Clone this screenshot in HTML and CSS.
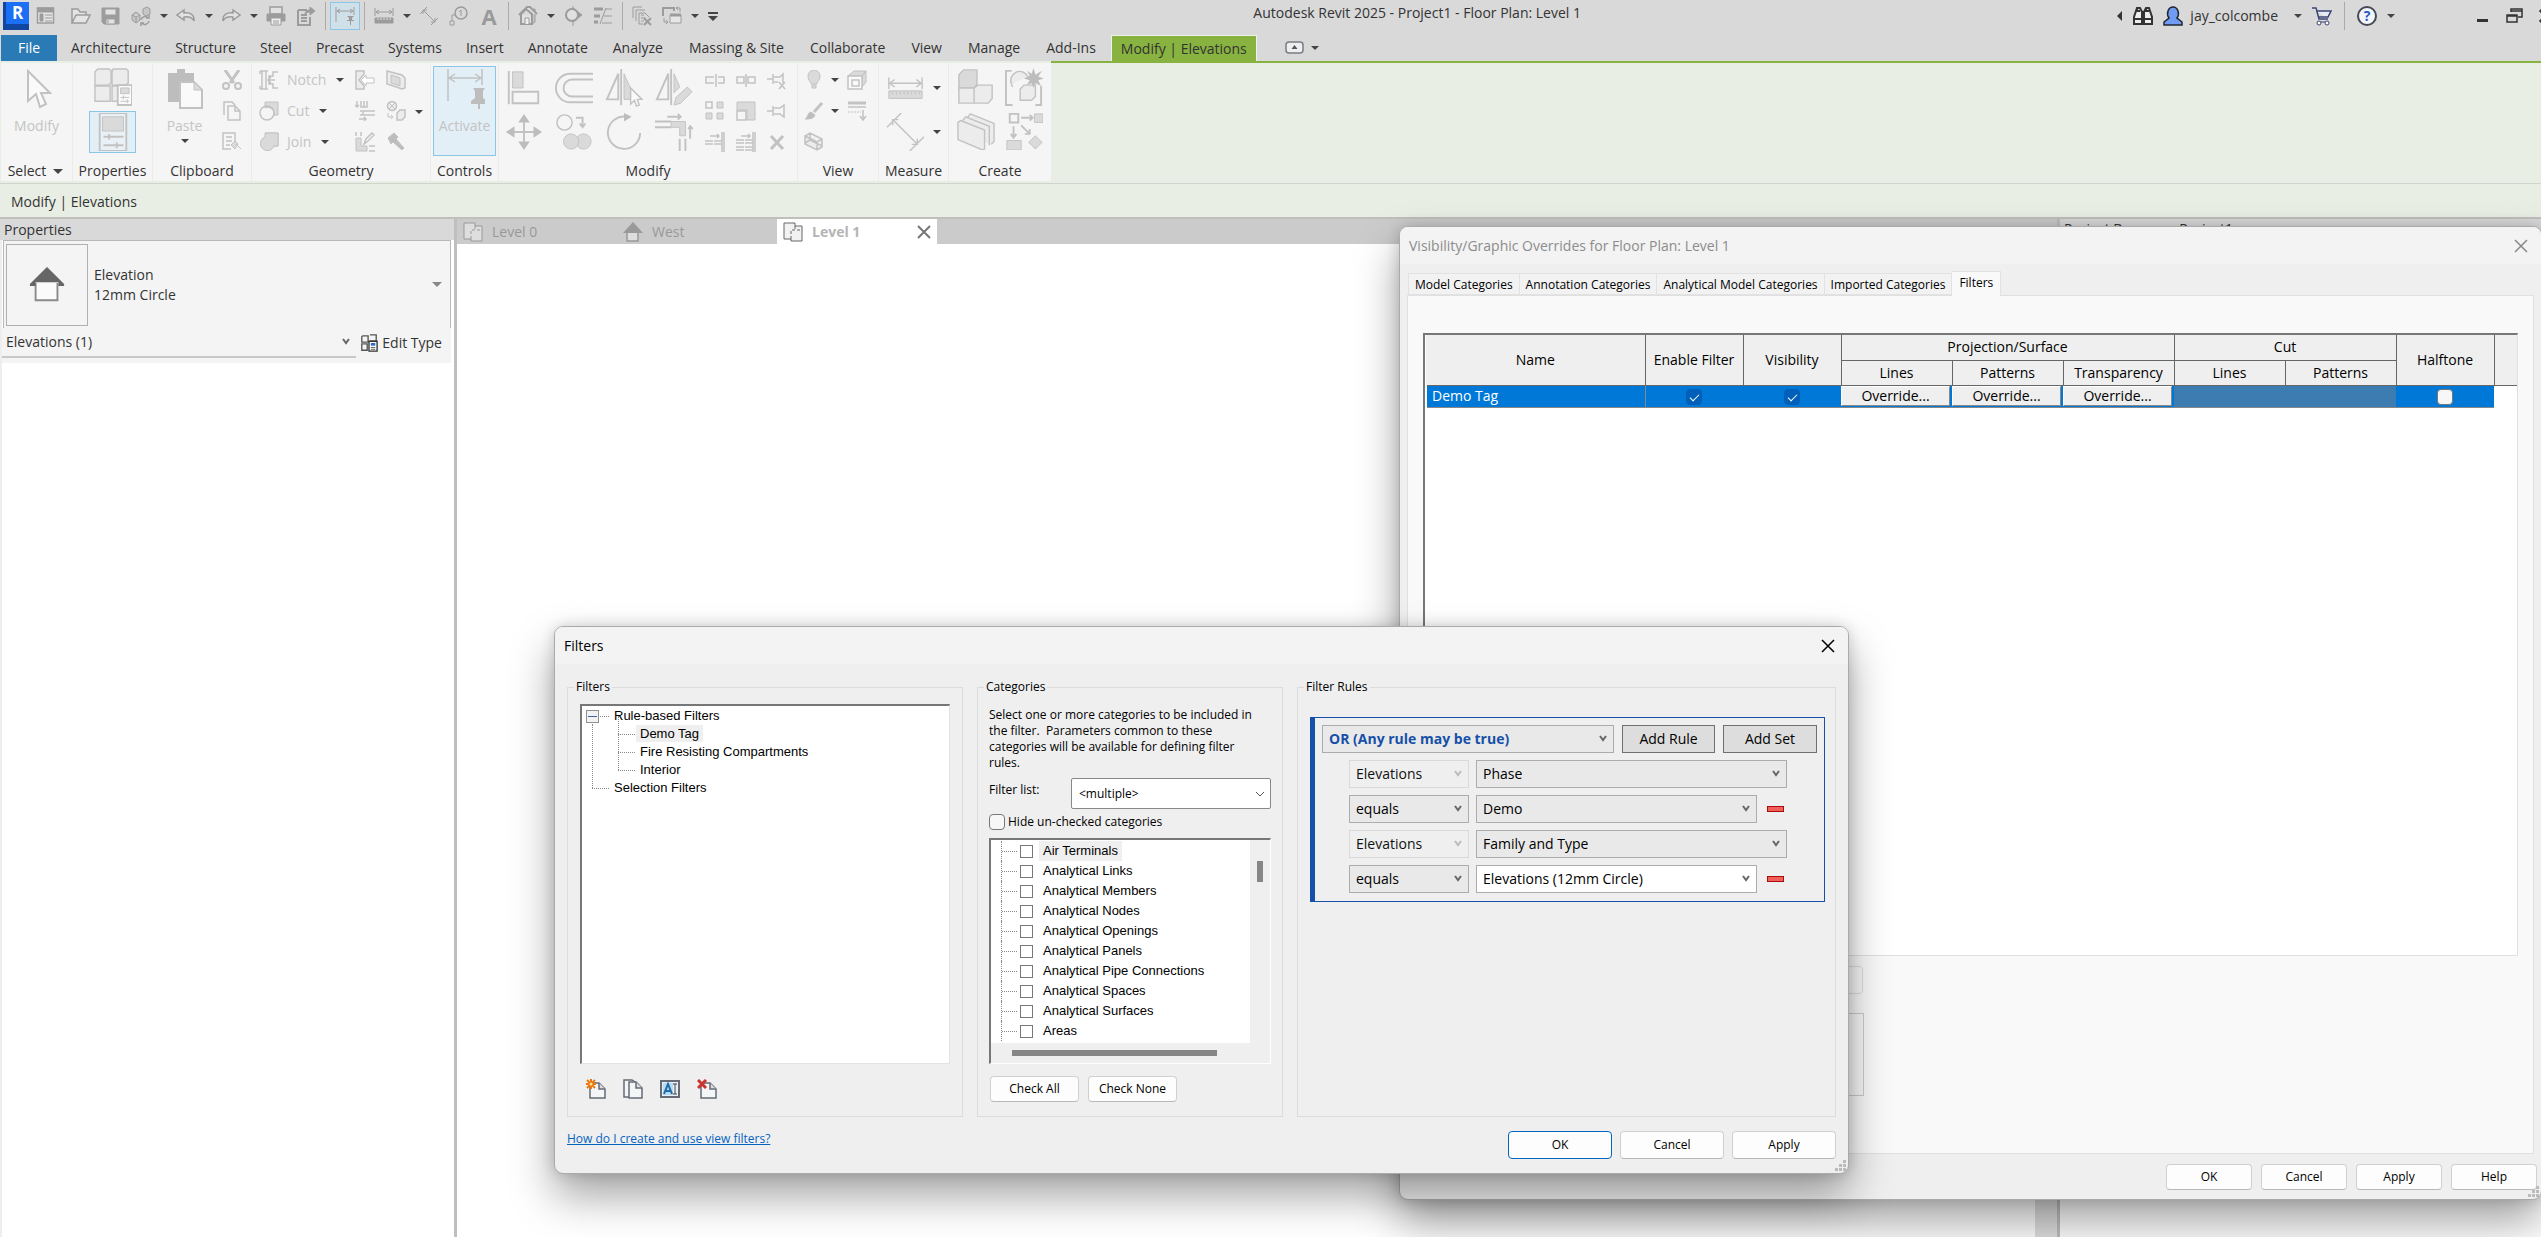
FILE: index.html
```html
<!doctype html>
<html lang="en">
  <head>
    <meta charset="UTF-8" />
    <meta name="viewport" content="width=device-width, initial-scale=1.0" />
    <title>Autodesk Revit 2025 - Project1 - Floor Plan: Level 1</title>
    <link rel="stylesheet" href="styles.css">
  </head>
  <body>
    <header class="titlebar">
      <div class="qat">
        <span class="logo"><b>R</b></span>
        <button class="tool" aria-label="Home"><svg class="icon" viewBox="0 0 20 20"><path d="M1.500 2h16v15h-16z" fill="#e4e4e4" stroke-width="1.500"/><path class="solid" d="M1.500 2h16v4h-16z"/><path class="solid" d="M4 8h3v7H4z"/><path d="M9 9h7M9 12h7M9 15h7"/></svg></button>
        <span class="spacer"></span>
        <button class="tool" aria-label="Open"><svg class="icon" viewBox="0 0 20 20"><path d="M1 17V3h6l2 3h6v3M1 17l4-8h14l-4 8z" fill="#e4e4e4" stroke-width="1.500"/></svg></button>
        <button class="tool" aria-label="Save"><svg class="icon" viewBox="0 0 20 20"><path class="solid" d="M1 2h17v16H3l-2-2z"/><path d="M4 3h11v6H4zM5 13h9v5H5z" fill="#e2e2e2"/><path d="M7 14v3"/></svg></button>
        <button class="tool" aria-label="Sync"><svg class="icon" viewBox="0 0 20 20"><path class="mid" d="M1 9l4-3 4 3v5l-4 3-4-3zM1 9l4 2 4-2M5 11v6M12 3l4-2 3 2v5l-4 2-3-2z"/><path d="M10 14a4 4 0 017-2M18 9v3h-3M18 15a4 4 0 01-7 2M10 20v-3h3" stroke-width="1.500"/></svg></button>
        <button class="arrow" aria-label="Sync options"></button>
        <button class="tool" aria-label="Undo"><svg class="icon" viewBox="0 0 20 20"><path d="M8 4L1 9l7 5v-3c5-1 9 1 10 4 1-6-4-9-10-8z" fill="#e2e2e2" stroke-width="1.500"/></svg></button>
        <button class="arrow" aria-label="Undo list"></button>
        <button class="tool" aria-label="Redo"><svg class="icon" viewBox="0 0 20 20"><path d="M12 4l7 5-7 5v-3c-5-1-9 1-10 4-1-6 4-9 10-8z" fill="#e2e2e2" stroke-width="1.500"/></svg></button>
        <button class="arrow" aria-label="Redo list"></button>
        <button class="tool" aria-label="Print"><svg class="icon" viewBox="0 0 20 20"><path d="M4 1h12v7H4z" fill="#e2e2e2" stroke-width="1.500"/><path class="solid" d="M1 8h18v7H1z"/><path d="M5 12h10v7H5z" fill="#eee"/><path d="M7 15h6M7 17h6"/></svg></button>
        <button class="tool" aria-label="Export"><svg class="icon" viewBox="0 0 20 20"><path d="M2 4h9M2 4v15h12v-8" stroke-width="2"/><path d="M5 9h6M5 12h6M5 15h6" stroke-width="2"/><path class="solid" d="M9 9c0-4 2-5 5-5V1l5 4-5 4V6c-3 0-4 1-5 3z"/></svg></button>
        <span class="sep"></span>
        <button class="tool on" aria-label="Activate dimensions"><svg class="icon" viewBox="0 0 20 20"><path d="M1 1v15M19 1v8M2 5h16M5 3L2 5l3 2M15 3l3 2-3 2"/><path class="solid" d="M12 10h7l-2 2v2h2v1h-7v-1h2v-2zM15 15h1v4h-1z" stroke="none"/></svg></button>
        <span class="sep"></span>
        <button class="tool" aria-label="Measure"><svg class="icon" viewBox="0 0 20 20"><path d="M1 2v8M19 2v8M2 6h16M5 4L2 6l3 2M15 4l3 2-3 2"/><path class="solid" d="M1 12h18v5H1z"/><path d="M4 12v2M7 12v2M10 12v2M13 12v2M16 12v2" stroke="#ddd"/></svg></button>
        <button class="arrow" aria-label="Measure options"></button>
        <button class="tool" aria-label="Aligned dimension"><svg class="icon" viewBox="0 0 20 20"><path d="M1 8l7-7M12 19l7-7M4 4l12 12M4 8V4h4M12 16h4v-4"/></svg></button>
        <button class="tool" aria-label="Tag"><svg class="icon" viewBox="0 0 20 20"><circle cx="12" cy="7" r="6" stroke-width="1.500"/><path d="M10 6l2-2v6M6 9H3v6"/><path d="M1 15h4v4H1z"/></svg></button>
        <button class="tool letter" aria-label="Text">A</button>
        <span class="sep"></span>
        <button class="tool" aria-label="3D view"><svg class="icon" viewBox="0 0 20 20"><path class="mid" d="M12 4l5-1v13l-3 2z"/><path d="M1 9l8-8 3 0 7 7M3 8v10h11V8L8 3z" fill="#e0e0e0" stroke-width="2"/><path d="M7 18v-6h4v6" fill="#eee"/></svg></button>
        <button class="arrow" aria-label="3D view options"></button>
        <button class="tool" aria-label="Section"><svg class="icon" viewBox="0 0 20 20"><path d="M10 0v3M10 15v5"/><path class="solid" d="M10 2l9 7-9 7z"/><circle cx="9" cy="9" r="6" fill="#e0e0e0" stroke-width="2"/></svg></button>
        <button class="tool" aria-label="Thin lines"><svg class="icon" viewBox="0 0 20 20"><path d="M1 3h9M1 10h6M1 16h4" stroke-width="3"/><path d="M7 18L13 2M12 3h7M11 10h8M9 17h10"/></svg></button>
        <span class="sep"></span>
        <button class="tool" aria-label="Close inactive views"><svg class="icon" viewBox="0 0 20 20"><path d="M1 12V1h9M4 15V4h9M7 18V7h6l4 4M7 18h4M9 9h3M9 12h4M9 15h3"/><path d="M12 12l7 7M19 12l-7 7" stroke-width="2"/></svg></button>
        <button class="tool" aria-label="Switch windows"><svg class="icon" viewBox="0 0 20 20"><path d="M1 10V2h11v3" stroke-width="2"/><path d="M8 9h11v8H8z" fill="#e6e6e6"/><path d="M8 9h11" stroke-width="3"/><path d="M14 2h4v4M16 1l-2 1 2 2M2 12v4h4M4 14l2 2-2 2"/></svg></button>
        <button class="arrow" aria-label="Window list"></button>
        <button class="tool customize" aria-label="Customize toolbar"><svg viewBox="0 0 20 20"><path d="M5 6h10v2H5zM5 10h10l-5 5z"/></svg></button>
      </div>
      <div class="app-title">Autodesk Revit 2025 - Project1 - Floor Plan: Level 1</div>
      <div class="account">
        <button class="arrow left" aria-label="Collapse search"></button>
        <button class="tool" aria-label="Search"><svg class="dark-icon" viewBox="0 0 20 20"><path d="M4 2h3l2 4v12H1v-7zM13 2h3l3 9v7h-8V6zM9 6h2v4H9M4 2v3h3M13 2v3h3M1 13h8M11 13h8"/></svg></button>
        <button class="tool" aria-label="Profile"><svg viewBox="0 0 20 20"><path d="M6 12C3 8 5 1 10 1s7 7 4 11l5 4v3H1v-3z" fill="#6f9cf2" stroke="#20262f" stroke-width="1.500"/></svg></button>
        <span class="user">jay_colcombe</span>
        <button class="arrow" aria-label="Account menu"></button>
        <button class="tool" aria-label="Store"><svg viewBox="0 0 20 20"><path d="M0 2h4l3 11h9M5 5h14l-3 6H7" fill="#e9ebf3" stroke="#3b4674" stroke-width="1.500"/><path d="M5 16h12" stroke="#3b4674"/><circle cx="7" cy="17" r="2" fill="#fff" stroke="#3b4674"/><circle cx="15" cy="17" r="2" fill="#fff" stroke="#3b4674"/></svg></button>
        <span class="sep"></span>
        <button class="tool help" aria-label="Help">?</button>
        <button class="arrow" aria-label="Help menu"></button>
        <div class="window-buttons">
          <button class="tool" aria-label="Minimize"><svg viewBox="0 0 20 20"><path d="M5 13h11v3H5z" fill="#333"/></svg></button>
          <button class="tool" aria-label="Restore"><svg viewBox="0 0 20 20"><path d="M7 6V3h11v8h-4M7 3h11v2H7z" fill="none" stroke="#333" stroke-width="1.500"/><path d="M3 9h10v7H3zM3 9h10v1H3z" fill="none" stroke="#333" stroke-width="1.500"/></svg></button>
          <button class="tool" aria-label="Close"><svg viewBox="0 0 20 20"><path d="M4 4l11 12M15 4L4 16" stroke="#333" stroke-width="3"/></svg></button>
        </div>
      </div>
    </header>

    <nav class="tabs">
      <button class="file">File</button>
      <button>Architecture</button>
      <button>Structure</button>
      <button>Steel</button>
      <button>Precast</button>
      <button>Systems</button>
      <button>Insert</button>
      <button>Annotate</button>
      <button>Analyze</button>
      <button>Massing &amp; Site</button>
      <button>Collaborate</button>
      <button>View</button>
      <button>Manage</button>
      <button>Add-Ins</button>
      <button class="context">Modify | Elevations</button>
      <button class="toggle" aria-label="Minimize ribbon"><svg viewBox="0 0 20 14"><rect x="1" y="1" width="17" height="11" rx="3" fill="#eee" stroke="#777d85" stroke-width="1.500"/><path d="M9.500 4l3 4h-6z" fill="#555"/></svg></button>
      <button class="arrow" aria-label="Ribbon options"></button>
    </nav>

    <section class="ribbon">
      <div class="panel w-select">
        <div class="panel-body">
          <button class="big"><svg class="icon" viewBox="0 0 40 40"><path d="M11 2v30l8-7 4 13 6-3-5-11h9z" fill="#fafafa" stroke-width="2"/></svg>Modify</button>
        </div>
        <div class="panel-label">Select <span class="arrow wide"></span></div>
      </div>
      <div class="panel w-properties">
        <div class="panel-body big-grid">
          <button aria-label="Type properties"><svg class="icon" viewBox="0 0 40 40"><path class="soft" d="M4 1h12l2 2v13l-3 2H1V4zM20 1h14l2 2v13l-3 2H19V4zM1 19h16v16H1zM19 19h16v16H19z" stroke-width="1.500"/><path d="M25 18h15v21H25z" fill="#fafafa" stroke-width="2"/><path class="mid" d="M28 21h9v6h-9z"/><path d="M28 31h9M28 35h9M31 29v4M35 33v4"/></svg></button>
          <button class="on" aria-label="Properties"><svg class="icon" viewBox="0 0 40 40"><path d="M6 0h28v40H6z" fill="#eaf1f6" stroke-width="2"/><path class="mid" d="M9 4h22v15H9z"/><path d="M10 25h21M10 34h21M16 22v6M24 31v6" stroke-width="2"/></svg></button>
        </div>
        <div class="panel-label">Properties</div>
      </div>
      <div class="panel w-clipboard">
        <div class="panel-body">
          <button class="big paste"><svg class="icon" viewBox="0 0 40 40"><path class="solid" d="M3 4h9V0h8v4h9v9H15v20H3z" stroke="none"/><path d="M15 13h14l8 8v18H15z" fill="#fafafa" stroke-width="2"/><path class="mid" d="M29 13v8h8z"/></svg>Paste<span class="arrow"></span></button>
          <div class="small-grid">
            <button aria-label="Cut to clipboard"><svg class="icon" viewBox="0 0 20 20"><path d="M3 0l9 13M17 0L8 13" stroke-width="3"/><circle cx="4" cy="16" r="3" stroke-width="2"/><circle cx="16" cy="16" r="3" stroke-width="2"/></svg></button>
            <button aria-label="Copy to clipboard"><svg class="icon" viewBox="0 0 20 20"><path d="M2 14V1h8l3 3M6 5h7l5 5v9H6zM13 5v5h5" stroke-width="1.500"/></svg></button>
            <button aria-label="Match type"><svg class="icon" viewBox="0 0 20 20"><path d="M9 17H1V1h12v8M4 5h6M4 9h6M4 13h4" stroke-width="1.500"/><path class="mid" d="M9 13l4-4 3 3-3 5zM14 12l5 5"/></svg></button>
          </div>
        </div>
        <div class="panel-label">Clipboard</div>
      </div>
      <div class="panel w-geometry">
        <div class="panel-body">
          <div class="small-grid labelled">
            <div><button><svg class="icon" viewBox="0 0 20 20"><path d="M1 1h8M1 19h8M3 1v18M7 1v18M1 1v3M1 19v-3M19 2h-5v4h-4v3M10 11v3h4v4h5M16 10h-7M12 7l-3 3 3 3" stroke-width="1.500"/></svg>Notch</button><span class="arrow"></span></div>
            <div><button><svg class="icon" viewBox="0 0 20 20"><path class="mid" d="M6 1h13v13h-4c1-5-4-9-9-7z"/><circle cx="8" cy="12" r="7" stroke-width="1.500"/></svg>Cut</button><span class="arrow"></span></div>
            <div><button><svg class="icon" viewBox="0 0 20 20"><path class="mid" d="M6 1h13v13h-4"/><path class="mid" d="M6 1v4a7 7 0 109 9h4V1z"/></svg>Join</button><span class="arrow"></span></div>
          </div>
          <div class="small-grid">
            <button aria-label="Cope"><svg class="icon" viewBox="0 0 20 20"><path class="soft" d="M1 1h8v3l-5 6 5 6v3H1z" stroke-width="1.500"/><path d="M6 10l5-5v3h8v5h-8v3z" fill="#fff"/></svg></button>
            <button aria-label="Wall joins"><svg class="icon" viewBox="0 0 20 20"><path d="M2 0v6M0 4l2 2 2-2M6 0v6h6V0M9 0v6M5 10h15M5 14h15M8 10v4M4 18h7M9 16l2 2-2 2" stroke-width="1.500"/></svg></button>
            <button aria-label="Split face"><svg class="icon" viewBox="0 0 20 20"><path class="mid" d="M1 6h5v8h6v5H1z"/><path d="M1 0v4M6 0v4M14 14h6M14 19h6M9 12l2-5 6-6 2 2-6 6z" stroke-width="1.500"/></svg></button>
          </div>
          <div class="small-grid">
            <button aria-label="Beam joins"><svg class="icon" viewBox="0 0 20 20"><path class="soft" d="M1 1l15 4 3 3v10l-3 1L1 14z" stroke-width="1.500"/><path class="mid" d="M5 5l9 3v8l-9-3z"/></svg></button>
            <button aria-label="Paint"><svg class="icon" viewBox="0 0 20 20"><circle class="soft" cx="6" cy="5" r="4.500" stroke-width="1.500"/><path d="M3 2l6 6M9 2L3 8M2 12v4h5M5 14l2 2-2 2"/><path class="soft" d="M11 12l3-3h5v7l-3 3h-5z" stroke-width="1.500"/></svg></button>
            <button aria-label="Demolish"><svg class="icon" viewBox="0 0 20 20"><path class="solid" d="M2 6l6-5 4 4-2 2 8 9-2 2-9-8-2 2z"/></svg></button>
          </div>
          <span class="arrow self-mid"></span>
        </div>
        <div class="panel-label">Geometry</div>
      </div>
      <div class="panel w-controls">
        <div class="panel-body">
          <button class="big on"><svg class="icon" viewBox="0 0 40 40"><path d="M3 0v32M37 0v16M4 9h32M10 5L4 9l6 4M30 5l6 4-6 4" stroke-width="1.500"/><path class="solid" d="M28 19h12l-2 3v7l4 3v3H26v-3l4-3v-7zM33 35h2v7h-2z" stroke="none"/></svg>Activate</button>
        </div>
        <div class="panel-label">Controls</div>
      </div>
      <div class="panel w-modify">
        <div class="panel-body">
          <div class="big-grid four">
            <button aria-label="Align"><svg class="icon" viewBox="0 0 40 40"><path d="M4 2v35M8 24h27v12H8z" stroke-width="2"/><path class="mid" d="M8 3h11v17H8z"/></svg></button>
            <button aria-label="Offset"><svg class="icon" viewBox="0 0 40 40"><path d="M40 5H16a14 14 0 000 30h24M40 11H18a9 9 0 000 18h22" stroke-width="2"/></svg></button>
            <button aria-label="Mirror by axis"><svg class="icon" viewBox="0 0 40 40"><path d="M14 5v27H2z" stroke-width="2"/><path d="M17 0v38" stroke-width="2"/><path class="mid" d="M20 5v27h12z"/><path d="M27 20v17l4-4 2 6 3-1-2-6h5z" fill="#fafafa" stroke-width="1.500"/></svg></button>
            <button aria-label="Mirror by line"><svg class="icon" viewBox="0 0 40 40"><path d="M14 5v27H2z" stroke-width="2"/><path d="M17 0v38" stroke-width="2"/><path class="mid" d="M20 5v20l6-6zM20 38l2-8 12-11 5 5-12 12z"/></svg></button>
            <button aria-label="Move"><svg class="icon" viewBox="0 0 40 40"><path d="M20 7v26M7 20h26" stroke-width="2"/><path class="solid" d="M20 1l6 9H14zM20 39l6-9H14zM1 20l9-6v12zM39 20l-9-6v12z" stroke="none"/></svg></button>
            <button aria-label="Copy"><svg class="icon" viewBox="0 0 40 40"><circle cx="10" cy="10" r="8" stroke-width="1.500"/><path d="M22 5h7v9M26 11l3 4 3-4" stroke-width="2"/><circle class="mid" cx="30" cy="30" r="8"/><circle class="mid" cx="17" cy="30" r="8"/></svg></button>
            <button aria-label="Rotate"><svg class="icon" viewBox="0 0 40 40"><path d="M23 4a17 17 0 1014 17" stroke-width="2"/><path class="solid" d="M20 0l8 4-8 5z" stroke="none"/></svg></button>
            <button aria-label="Trim"><svg class="icon" viewBox="0 0 40 40"><path d="M0 9h17M0 15h17M26 27v14M32 27v14M37 27V14M35 17l2-3 3 3M13 4h14M24 1l3 3-3 3" stroke-width="2"/><path class="mid" d="M17 9h15v15h-6v-9h-9z"/></svg></button>
          </div>
          <div class="small-grid three">
            <button aria-label="Split"><svg class="icon" viewBox="0 0 20 20"><path d="M9 7H1v6h8M11 4v13M13 7h6v6h-6" stroke-width="1.500"/></svg></button>
            <button aria-label="Split with gap"><svg class="icon" viewBox="0 0 20 20"><path d="M1 7h7v6H1zM12 7h7v6h-7zM10 4v13" stroke-width="1.500"/></svg></button>
            <button aria-label="Unpin"><svg class="icon" viewBox="0 0 20 20"><path d="M0 9h6M6 4v10M7 7h6l3-3v9M7 12h4M12 12l6 7M18 12l-6 7" stroke-width="1.500"/></svg></button>
            <button aria-label="Array"><svg class="icon" viewBox="0 0 20 20"><path class="mid" d="M12 1h6v6h-6zM1 12h6v6H1zM12 12h6v6h-6z"/><path d="M1 1h6v6H1z" stroke-width="1.500"/></svg></button>
            <button aria-label="Scale"><svg class="icon" viewBox="0 0 20 20"><path class="mid" d="M1 1h18v18h-8V9H1z"/><path d="M1 10h9v9H1z" stroke-width="1.500"/></svg></button>
            <button aria-label="Pin"><svg class="icon" viewBox="0 0 20 20"><path d="M0 10h6M6 5v10M7 7h6l4-3v12l-4-3H7" stroke-width="1.500"/></svg></button>
            <button aria-label="Trim single"><svg class="icon" viewBox="0 0 20 20"><path d="M0 9h8M0 12h8M5 4h9M12 2l2 2-2 2M9 9h8M9 12h8M17 0v20M19 0v20" stroke-width="1.500"/></svg></button>
            <button aria-label="Trim multiple"><svg class="icon" viewBox="0 0 20 20"><path d="M0 8h8M0 11h8M0 15h8M0 18h8M5 4h9M12 2l2 2-2 2M9 8h8M9 11h8M9 15h8M9 18h8M17 0v20M19 0v20" stroke-width="1.500"/></svg></button>
            <button aria-label="Delete"><svg class="icon" viewBox="0 0 20 20"><path d="M4 4l12 13M16 4L4 17" stroke-width="3"/></svg></button>
          </div>
        </div>
        <div class="panel-label">Modify</div>
      </div>
      <div class="panel w-view">
        <div class="panel-body">
          <div class="small-grid">
            <button aria-label="Hide"><svg class="icon" viewBox="0 0 20 20"><path class="mid" d="M7 14c0-3-3-3-3-8a6 6 0 0112 0c0 5-3 5-3 8zM8 15h4v3H8z"/></svg></button>
            <button aria-label="Override graphics"><svg class="icon" viewBox="0 0 20 20"><path class="mid" d="M18 2l-8 9"/><path class="solid" d="M1 18c3-1 2-6 6-7l4 3c-1 4-6 4-10 4z"/><path d="M10 11l8-9" stroke-width="3"/></svg></button>
            <button aria-label="Selection box"><svg class="icon" viewBox="0 0 20 20"><path class="soft" d="M1 4l5-3 12 6v8l-5 3-12-6zM1 4l12 6 5-3M13 10v8M6 1v7l12 6M6 8l-5 3" stroke-width="1.500"/></svg></button>
          </div>
          <div class="small-grid arrows"><span class="arrow"></span><span class="arrow"></span></div>
          <div class="small-grid">
            <button aria-label="Displace"><svg class="icon" viewBox="0 0 20 20"><path class="mid" d="M1 6l6-5h12l-4 5zM15 6l4-5v11l-4 5z"/><path d="M1 6h14v13H1zM5 10h7v6H5z" fill="#fafafa" stroke-width="1.500"/></svg></button>
            <button aria-label="Linework"><svg class="icon" viewBox="0 0 20 20"><path d="M1 2h18" stroke-width="3"/><path d="M1 6h18M16 9v9M13 15l3 4 3-4" stroke-width="1.500"/><path d="M1 11h13" stroke-dasharray="2 1"/></svg></button>
          </div>
        </div>
        <div class="panel-label">View</div>
      </div>
      <div class="panel w-measure">
        <div class="panel-body">
          <div class="big-grid">
            <button aria-label="Measure between"><svg class="icon" viewBox="0 0 40 40"><path d="M3 9v12M38 9v12M4 15h33M9 11l-5 4 5 4M32 11l5 4-5 4" stroke-width="1.500"/><path class="mid" d="M3 23h35v8H3z"/><path d="M7 24v3M11 24v3M15 24v3M19 24v3M23 24v3M27 24v3M31 24v3M35 24v3"/></svg></button>
            <button aria-label="Aligned"><svg class="icon" viewBox="0 0 40 40"><path d="M1 15L16 0M25 40l15-15M8 8l25 25M7 13V7h6M27 33h6v-6" stroke-width="1.500"/></svg></button>
          </div>
          <div class="big-grid arrows"><span class="arrow"></span><span class="arrow"></span></div>
        </div>
        <div class="panel-label">Measure</div>
      </div>
      <div class="panel w-create">
        <div class="panel-body big-grid two">
          <button aria-label="Create assembly"><svg class="icon" viewBox="0 0 40 40"><path class="mid" d="M2 7l5-5h14v15l-3 4H2z" stroke-width="1.500"/><path class="soft" d="M2 21h16v16H2zM18 21l4-3h15v14l-4 5H18z" stroke-width="1.500"/></svg></button>
          <button aria-label="Create group"><svg class="icon" viewBox="0 0 40 40"><path d="M7 3H1v36h7M32 39h6V19" stroke-width="2"/><path class="soft" d="M7 17a9 9 0 0117-8M8 20c-1-2-1-2-1-3M16 22l4-4h12v12l-4 4H16z" stroke-width="1.500"/><path class="solid" d="M30 0l2 7 7-4-4 6 6 2-6 2 3 6-6-3-2 5-2-5-5 2 3-5-6-2 6-3-3-5 5 3z" stroke="none"/></svg></button>
          <button aria-label="Create parts"><svg class="icon" viewBox="0 0 40 40"><path class="soft" d="M11 6l3-4 25 10v19l-3 3M6 9l3-4 25 10v20M1 11l3-2 25 10v20l-2 1L1 29z" stroke-width="1.500"/></svg></button>
          <button aria-label="Create similar"><svg class="icon" viewBox="0 0 40 40"><path d="M5 2h9v9H5zM17 6h12M26 3l3 3-3 3M9 15v11M6 23l3 4 3-4M17 14l9 9M26 18v5h-5" stroke-width="2"/><path class="mid" d="M31 2h9v9h-9zM2 30h15v10H2zM32 25l7 7-7 7-7-7z"/></svg></button>
        </div>
        <div class="panel-label">Create</div>
      </div>
    </section>
    <div class="options-bar">Modify | Elevations</div>

    <main class="workspace">
      <aside class="properties">
        <h2>Properties</h2>
        <div class="type-selector">
          <div class="type-image"><svg viewBox="0 0 40 40"><path d="M8 18v18h23V18" fill="#fafafa" stroke="#8a8a8a" stroke-width="2"/><path d="M20 1l18 18v2h-6v-4H8v4H2v-2z" fill="#666"/></svg></div>
          <div class="type-name">Elevation<br>12mm Circle</div>
          <span class="arrow wide pale"></span>
        </div>
        <div class="instance-row">
          <select aria-label="Instances"><option>Elevations (1)</option></select>
          <button><svg viewBox="0 0 20 20"><path d="M3 2h6v7H2V3zM11 1h7v7h-7M2 11h6v7H2z" fill="#f4f4f4" stroke="#555" stroke-width="1.500"/><path d="M10 8h9v11h-9z" fill="#fff" stroke="#333" stroke-width="1.500"/><path d="M12 10h5v3h-5z" fill="#2a6fc0"/><path d="M12 15h5M12 17h5" stroke="#555"/></svg>Edit Type</button>
        </div>
      </aside>
      <section class="view-area">
        <div class="view-tabs">
          <button><svg class="plan" viewBox="0 0 20 20"><path d="M1 1h11v3h7v15H8v-2H1z"/><path d="M12 4v5M8 17V8h10" stroke-dasharray="3 2"/></svg>Level 0</button>
          <button><svg viewBox="0 0 20 20"><path d="M4 9v10h11V9" fill="#ddd" stroke="#999" stroke-width="1.500"/><path d="M10 0l10 11H0z" fill="#999"/></svg>West</button>
          <button class="active"><svg class="plan" viewBox="0 0 20 20"><path d="M1 1h11v3h7v15H8v-2H1z"/><path d="M12 4v5M8 17V8h10" stroke-dasharray="3 2"/></svg>Level 1<svg class="close" viewBox="0 0 14 14"><path d="M1 1l12 12M13 1L1 13" stroke="#777" stroke-width="2"/></svg></button>
        </div>
        <div class="canvas"><div class="scrollbar"></div></div>
      </section>
      <aside class="browser"><h2>Project Browser - Project1</h2></aside>
    </main>

    <section class="dialog overrides" role="dialog" aria-label="Visibility/Graphic Overrides">
      <div class="dialog-title"><span>Visibility/Graphic Overrides for Floor Plan: Level 1</span><button aria-label="Close"><svg viewBox="0 0 14 14"><path d="M1 1l12 12M13 1L1 13"/></svg></button></div>
      <div class="dialog-body">
        <div class="dialog-tabs">
          <button>Model Categories</button>
          <button>Annotation Categories</button>
          <button>Analytical Model Categories</button>
          <button>Imported Categories</button>
          <button class="active">Filters</button>
        </div>
        <div class="tab-page">
          <div class="table-box">
            <table>
              <colgroup><col class="c-name"><col class="c-check"><col class="c-check"><col class="c-cell"><col class="c-cell"><col class="c-cell"><col class="c-cell"><col class="c-cell"><col class="c-check"><col></colgroup>
              <thead>
                <tr><th rowspan="2">Name</th><th rowspan="2">Enable Filter</th><th rowspan="2">Visibility</th><th colspan="3">Projection/Surface</th><th colspan="2">Cut</th><th rowspan="2">Halftone</th><th rowspan="2" class="end"></th></tr>
                <tr><th>Lines</th><th>Patterns</th><th>Transparency</th><th>Lines</th><th>Patterns</th></tr>
              </thead>
              <tbody>
                <tr>
                  <td class="name">Demo Tag</td>
                  <td><input type="checkbox" aria-label="Enable filter" checked></td>
                  <td><input type="checkbox" aria-label="Visibility" checked></td>
                  <td class="btn"><button>Override...</button></td>
                  <td class="btn"><button>Override...</button></td>
                  <td class="btn"><button>Override...</button></td>
                  <td class="hatch"></td>
                  <td class="hatch"></td>
                  <td><input type="checkbox" aria-label="Halftone"></td>
                  <td class="blank"></td>
                </tr>
              </tbody>
            </table>
          </div>
          <div class="hidden-button"></div>
          <div class="hidden-box"></div>
        </div>
        <div class="dialog-footer">
          <button>OK</button>
          <button>Cancel</button>
          <button>Apply</button>
          <button>Help</button>
        </div>
      </div>
      <svg class="grip" viewBox="0 0 12 12"><path d="M8 0h3v3H8zM4 4h3v3H4zM8 4h3v3H8zM0 8h3v3H0zM4 8h3v3H4zM8 8h3v3H8z"/></svg>
    </section>

    <section class="dialog filters" role="dialog" aria-label="Filters">
      <div class="dialog-title"><span>Filters</span><button aria-label="Close"><svg viewBox="0 0 14 14"><path d="M1 1l12 12M13 1L1 13"/></svg></button></div>
      <div class="dialog-body">
        <div class="groups">
          <fieldset>
            <legend>Filters</legend>
            <div class="group">
              <ul class="tree">
                <li class="root"><button class="expander" aria-label="Collapse"></button><span>Rule-based Filters</span>
                  <ul>
                    <li class="selected"><span>Demo Tag</span></li>
                    <li><span>Fire Resisting Compartments</span></li>
                    <li><span>Interior</span></li>
                  </ul>
                </li>
                <li class="last"><span>Selection Filters</span></li>
              </ul>
              <div class="filter-tools">
                <button aria-label="New"><svg viewBox="0 0 20 20"><path d="M4 4h9l6 6v9H4z" fill="#f4f5f7" stroke="#666b75" stroke-width="1.500"/><path d="M13 4v6h6" fill="#ddd" stroke="#666b75" stroke-width="1.500"/><path d="M5 0v10M0 5h10M1 1l8 8M9 1L1 9" stroke="#e8780f" stroke-width="2"/><circle cx="5" cy="5" r="1.500" fill="#ffe08a"/></svg></button>
                <button aria-label="Duplicate"><svg viewBox="0 0 20 20"><path d="M6 18H1V1h8l3 2" fill="#f4f5f7" stroke="#666b75" stroke-width="1.500"/><path d="M6 3h7l6 6v10H6z" fill="#f4f5f7" stroke="#666b75" stroke-width="1.500"/><path d="M13 3v6h6" fill="#ddd" stroke="#666b75" stroke-width="1.500"/></svg></button>
                <button aria-label="Rename"><svg viewBox="0 0 20 20"><path d="M1 2h18v16H1z" fill="#e9eef4" stroke="#666b75" stroke-width="2"/><path d="M3 4h10v12H3z" fill="#b4dcf4"/><path d="M4 15L8 5l4 10M6 12h4" fill="none" stroke="#1f6ca8" stroke-width="2"/><path d="M13 5h4M13 15h4M15 5v10" stroke="#444"/></svg></button>
                <button aria-label="Delete"><svg viewBox="0 0 20 20"><path d="M4 4h9l6 6v9H4z" fill="#f4f5f7" stroke="#666b75" stroke-width="1.500"/><path d="M13 4v6h6" fill="#ddd" stroke="#666b75" stroke-width="1.500"/><path d="M1 1l8 8M9 1L1 9" stroke="#c8362e" stroke-width="3"/></svg></button>
              </div>
            </div>
          </fieldset>
          <fieldset>
            <legend>Categories</legend>
            <div class="group categories">
              <p>Select one or more categories to be included in the filter.&nbsp; Parameters common to these categories will be available for defining filter rules.</p>
              <div class="list-row">
                <label for="filter-list">Filter list:</label>
                <select id="filter-list"><option>&lt;multiple&gt;</option></select>
              </div>
              <label class="hide-row"><input type="checkbox">Hide un-checked categories</label>
              <div class="category-list">
                <div class="category-items">
                  <label><input type="checkbox"><span class="selected">Air Terminals</span></label>
                  <label><input type="checkbox"><span>Analytical Links</span></label>
                  <label><input type="checkbox"><span>Analytical Members</span></label>
                  <label><input type="checkbox"><span>Analytical Nodes</span></label>
                  <label><input type="checkbox"><span>Analytical Openings</span></label>
                  <label><input type="checkbox"><span>Analytical Panels</span></label>
                  <label><input type="checkbox"><span>Analytical Pipe Connections</span></label>
                  <label><input type="checkbox"><span>Analytical Spaces</span></label>
                  <label><input type="checkbox"><span>Analytical Surfaces</span></label>
                  <label><input type="checkbox"><span>Areas</span></label>
                </div>
                <div class="v-scroll"></div>
                <div class="h-scroll"></div>
              </div>
              <div class="check-buttons">
                <button class="push">Check All</button>
                <button class="push">Check None</button>
              </div>
            </div>
          </fieldset>
          <fieldset>
            <legend>Filter Rules</legend>
            <div class="rules">
              <div class="rule-head">
                <select class="combine" aria-label="Rule set"><option>OR (Any rule may be true)</option></select>
                <button>Add Rule</button>
                <button>Add Set</button>
              </div>
              <div class="rule">
                <select aria-label="Category" disabled><option>Elevations</option></select>
                <select class="wide" aria-label="Parameter"><option>Phase</option></select>
              </div>
              <div class="rule">
                <select aria-label="Operator"><option>equals</option></select>
                <select class="value" aria-label="Value"><option>Demo</option></select>
                <button class="remove" aria-label="Remove rule"></button>
              </div>
              <div class="rule">
                <select aria-label="Category" disabled><option>Elevations</option></select>
                <select class="wide" aria-label="Parameter"><option>Family and Type</option></select>
              </div>
              <div class="rule">
                <select aria-label="Operator"><option>equals</option></select>
                <select class="value white" aria-label="Value"><option>Elevations (12mm Circle)</option></select>
                <button class="remove" aria-label="Remove rule"></button>
              </div>
            </div>
          </fieldset>
        </div>
        <div class="dialog-footer">
          <a href="#">How do I create and use view filters?</a>
          <button class="default">OK</button>
          <button>Cancel</button>
          <button>Apply</button>
        </div>
      </div>
      <svg class="grip" viewBox="0 0 12 12"><path d="M8 0h3v3H8zM4 4h3v3H4zM8 4h3v3H8zM0 8h3v3H0zM4 8h3v3H4zM8 8h3v3H8z"/></svg>
    </section>
  </body>
</html>
```

FILE: styles.css
```css
* {
  box-sizing: border-box;
}
body {
  margin: 0;
  height: 100vh;
  display: flex;
  flex-direction: column;
  overflow: hidden;
  background: #d9d9d9;
  color: #333;
  font-family: "Open Sans", "Noto Sans", sans-serif;
  font-size: 14px;
  line-height: 20px;
}
button,
select,
input {
  font: inherit;
  color: inherit;
  margin: 0;
}
button {
  border: 0;
  padding: 0;
  background: none;
  white-space: nowrap;
}
h2 {
  margin: 0;
  font-size: 14px;
  font-weight: normal;
}
svg {
  display: block;
  flex: none;
}

/* small triangle used next to split buttons */
.arrow {
  width: 15px;
  display: flex;
  align-items: center;
  justify-content: center;
  flex: none;
}
.arrow::after {
  content: "";
  border: 4px solid transparent;
  border-top-color: #444;
  border-bottom: 0;
}
.arrow.wide::after {
  border-width: 5px 5px 0;
}
.arrow.pale::after {
  border-top-color: #888;
}
.arrow.left::after {
  border: 5px solid transparent;
  border-right-color: #333;
  border-left: 0;
}

/* title bar */
.titlebar {
  display: flex;
  height: 35px;
  padding: 1px 0 4px 3px;
}
.qat,
.account {
  display: flex;
  align-items: center;
}
.account .arrow {
  width: 18px;
}
.account .sep {
  margin: 0 7px;
}
.tool {
  width: 30px;
  height: 28px;
  display: flex;
  align-items: center;
  justify-content: center;
}
.tool svg {
  width: 20px;
  height: 20px;
}
.icon {
  fill: none;
  stroke: currentColor;
  color: #9c9c9c;
}
.icon .solid {
  fill: currentColor;
}
.icon .mid {
  fill: #c6c6c6;
}
.icon .soft {
  fill: #e6e6e6;
}
.tool.on,
.ribbon .on {
  background: #e3eff6;
  border: 1px solid #8cc6e6;
}
.tool.on {
  background: #cfe0e9;
}
.tool.letter {
  font-size: 22px;
  font-weight: bold;
  color: #9a9a9a;
}
.logo {
  width: 26px;
  height: 28px;
  margin-right: 2px;
  padding-left: 3px;
  display: flex;
  background: #1146a0;
}
.logo b {
  width: 23px;
  height: 22px;
  background: #1b6ff5;
  color: #fff;
  font-size: 17px;
  line-height: 22px;
  text-align: center;
}
.spacer {
  width: 5px;
}
.sep {
  width: 1px;
  height: 28px;
  margin: 0 4px;
  background: #aaa;
}
.customize {
  width: 22px;
  fill: #444;
}
.app-title {
  flex: 1;
  text-align: center;
  line-height: 24px;
}
.dark-icon {
  fill: #eee;
  stroke: #333;
  stroke-width: 2;
}
.user {
  padding: 0 11px 0 2px;
}
.help {
  width: 20px;
  height: 20px;
  margin: 0 5px;
  border: 2px solid #444a55;
  border-radius: 50%;
  background: #f2f5fa;
  color: #2a5bc0;
  font-weight: bold;
  line-height: 16px;
}
.window-buttons {
  display: flex;
  gap: 2px;
  margin-left: 67px;
  margin-right: -20px;
}

/* ribbon tabs */
.tabs {
  display: flex;
  height: 26px;
  padding-left: 1px;
}
.tabs button {
  padding: 0 12px;
}
.tabs button:nth-child(n + 9) {
  padding: 0 13px;
}
.tabs .file {
  width: 56px;
  margin-right: 2px;
  background: #2a7ab5;
  color: #fff;
}
.tabs .context:nth-child(n) {
  margin-left: 2px;
  padding: 0 9px;
  border: 1px solid #eef3ea;
  border-bottom: 0;
  background: #88b340;
}
.tabs .toggle:nth-child(n) {
  padding: 0 0 0 28px;
}
.toggle svg {
  width: 20px;
  height: 14px;
}
.tabs .arrow:nth-child(n) {
  padding: 0;
  width: 20px;
}

/* ribbon */
.ribbon {
  display: flex;
  gap: 1px;
  height: 123px;
  padding: 2px 0 2px 1px;
  border-bottom: 1px solid #cfd4cd;
  background: linear-gradient(to right, #e8eee3 1051px, #88b340 1051px) top / 100% 2px no-repeat #e8eee3;
}
.ribbon .icon {
  color: #c2c2c2;
}
.ribbon .icon .solid {
  fill: #bdbdbd;
}
.ribbon .icon .mid {
  fill: #dadada;
}
.ribbon .icon .soft {
  fill: #ececec;
}
.panel {
  display: flex;
  flex-direction: column;
  background: #f5f5f5;
}
.panel-body {
  display: flex;
  flex: 1;
  padding: 1px 0;
}
.panel-label {
  height: 20px;
  display: flex;
  align-items: center;
  justify-content: center;
  gap: 4px;
}
.w-select {
  width: 71px;
}
.w-properties {
  width: 79px;
}
.w-clipboard {
  width: 98px;
}
.w-geometry {
  width: 178px;
}
.w-controls {
  width: 67px;
}
.w-modify {
  width: 298px;
}
.w-view {
  width: 80px;
}
.w-measure {
  width: 69px;
}
.w-create {
  width: 102px;
}
.big {
  flex: 1;
  height: 90px;
  margin: 2px;
  padding-top: 3px;
  display: flex;
  flex-direction: column;
  align-items: center;
  gap: 7px;
  color: #c4c4c4;
}
.big svg {
  width: 40px;
  height: 40px;
}
.big.on {
  padding-top: 2px;
}
.big .arrow {
  margin-top: -4px;
}
.big-grid {
  display: grid;
  grid-template-rows: 44px 44px;
  padding-top: 2px;
  justify-content: center;
}
.big-grid.two {
  grid-template-columns: 48px 48px;
}
.big-grid.four {
  grid-template-columns: repeat(4, 50px);
}
.big-grid button {
  display: flex;
  align-items: center;
  justify-content: center;
}
.big-grid svg {
  width: 38px;
  height: 38px;
}
.w-properties .on {
  width: 47px;
  height: 42px;
  margin-top: 2px;
}
.small-grid {
  display: grid;
  grid-template-rows: repeat(3, 31px);
  grid-template-columns: 31px;
}
.small-grid.three {
  grid-template-columns: repeat(3, 31px);
}
.small-grid button {
  display: flex;
  align-items: center;
  justify-content: center;
}
.small-grid svg {
  width: 20px;
  height: 20px;
}
.small-grid.arrows,
.big-grid.arrows {
  grid-template-columns: 12px;
}
.arrows .arrow {
  width: 12px;
}
.small-grid.labelled {
  grid-template-columns: 96px;
  padding-left: 7px;
}
.labelled > div {
  display: flex;
  color: #c4c4c4;
}
.labelled button {
  gap: 8px;
  margin-right: 6px;
}
.w-geometry .labelled {
  flex: none;
  width: 97px;
}
.w-clipboard .small-grid {
  width: 35px;
}
.w-measure .big-grid:first-child {
  grid-template-columns: 52px;
}

.options-bar {
  height: 35px;
  padding: 8px 11px;
  border-bottom: 2px solid #bfbfbf;
  background: #e8eee3;
}

/* workspace */
.workspace {
  flex: 1;
  display: flex;
  min-height: 0;
  background: #fff;
}
.properties {
  width: 457px;
  padding-right: 3px;
  border-right: 3px solid #bfbfbf;
  border-left: 2px solid #eee;
}
.properties h2 {
  height: 21px;
  margin: 0 -3px 0 -2px;
  padding: 1px 4px 0;
  background: #d9d9d9;
}
.type-selector {
  display: flex;
  align-items: center;
  height: 88px;
  margin-left: 1px;
  padding: 2px;
  border: 1px solid #b8b8b8;
  border-bottom: 0;
  background: #f4f4f4;
}
.type-image {
  width: 82px;
  height: 82px;
  display: flex;
  align-items: center;
  justify-content: center;
  border: 1px solid #b0b0b0;
}
.type-image svg {
  width: 38px;
  height: 38px;
}
.type-name {
  flex: 1;
  padding-left: 6px;
}
.type-selector .arrow {
  width: 22px;
}
.instance-row {
  display: flex;
  gap: 4px;
  height: 35px;
  padding-bottom: 5px;
  background: #f4f4f4;
}
.instance-row select {
  flex: 1;
  padding: 0 4px;
  border: 0;
  border-bottom: 2px solid #c8c8c8;
}
.instance-row button {
  display: flex;
  align-items: center;
  gap: 4px;
  padding-right: 9px;
}
.instance-row svg {
  width: 18px;
  height: 18px;
}
select {
  appearance: none;
  border-radius: 0;
  background: url("data:image/svg+xml,%3Csvg xmlns='http://www.w3.org/2000/svg' width='10' height='8'%3E%3Cpath d='M2 1l3 4 3-4' fill='none' stroke='%23666' stroke-width='2'/%3E%3C/svg%3E") right 5px center / 10px 8px no-repeat;
}
.view-area {
  flex: 1;
  display: flex;
  flex-direction: column;
}
.view-tabs {
  display: flex;
  height: 25px;
  background: #cbcbcb;
}
.view-tabs button {
  width: 160px;
  padding: 0 6px;
  display: flex;
  align-items: center;
  gap: 9px;
  color: #999;
}
.view-tabs svg {
  width: 20px;
  height: 20px;
}
.view-tabs .active {
  background: #fff;
  color: #b4b4b4;
  font-weight: bold;
}
.view-tabs .close {
  width: 14px;
  height: 14px;
  margin-left: auto;
}
.plan {
  fill: #dedede;
  stroke: #999;
  stroke-width: 1;
}
.active .plan {
  fill: #f2f2f2;
  stroke: #666;
}
.canvas {
  flex: 1;
  display: flex;
  justify-content: flex-end;
}
.scrollbar {
  width: 22px;
  background: #e0e0e0;
}
.browser {
  width: 484px;
  border-left: 3px solid #bfbfbf;
}
.browser h2 {
  padding-left: 4px;
  background: #d9d9d9;
}

/* dialogs */
.dialog {
  position: absolute;
  border: 1px solid #aaa;
  border-radius: 9px;
  background: #efefef;
  color: #000;
  font-size: 12px;
  line-height: 16px;
  box-shadow: 0 22px 44px rgba(0, 0, 0, 0.36), 0 0 14px rgba(0, 0, 0, 0.16);
}
.overrides {
  top: 226px;
  right: -1px;
  width: 1143px;
}
.filters {
  top: 626px;
  left: 554px;
  width: 1295px;
}
.dialog-title {
  height: 37px;
  display: flex;
  align-items: center;
  justify-content: space-between;
  padding: 0 13px 0 9px;
  border-radius: 8px 8px 0 0;
  background: #f3f3f3;
  font-size: 14px;
}
.dialog-title svg {
  width: 14px;
  height: 14px;
  stroke: #000;
  stroke-width: 1.500;
}
.overrides .dialog-title {
  color: #8c8c8c;
}
.overrides .dialog-title svg {
  stroke: #888;
}
.dialog-tabs {
  display: flex;
  align-items: flex-end;
  height: 31px;
  padding-left: 8px;
}
.dialog-tabs button {
  height: 22px;
  padding: 1px 6px 0;
  border: 1px solid #e2e2e2;
  border-left-width: 0;
  background: #f2f2f2;
}
.dialog-tabs button:first-child {
  border-left-width: 1px;
}
.dialog-tabs .active {
  position: relative;
  height: 25px;
  margin-bottom: -1px;
  padding: 0 7px 2px;
  border-bottom: 0;
  background: #f9f9f9;
}
.tab-page {
  height: 859px;
  margin: 0 7px;
  padding: 37px 15px;
  border: 1px solid #e0e0e0;
  background: #f9f9f9;
}
.table-box {
  height: 623px;
  border: 1px solid #e0e0e0;
  border-top: 2px solid #777;
  border-left: 2px solid #777;
  background: #fff;
}
table {
  width: 100%;
  table-layout: fixed;
  border-collapse: collapse;
  font-size: 14px;
  line-height: 20px;
}
.c-name {
  width: 219px;
}
.c-check {
  width: 98px;
}
.c-cell {
  width: 111px;
}
th {
  height: 25px;
  padding: 0;
  border: 1px solid #666;
  border-top: 0;
  background: #efefef;
  font-weight: normal;
}
th:first-child {
  border-left: 0;
}
.end {
  border-right: 0;
}
tbody tr {
  height: 22px;
}
td {
  height: 22px;
  padding: 0;
  background: #0078d7;
  border-bottom: 1px solid #888;
  text-align: center;
}
td.name {
  padding-left: 5px;
  border-left: 2px solid #fff;
  border-right: 1px solid #888;
  color: #fff;
  text-align: left;
}
td.btn button {
  display: block;
  width: calc(100% - 2px);
  height: 20px;
  border: 1px solid #fff;
  border-right-color: #888;
  border-bottom-color: #888;
  background: #efefef;
  line-height: 18px;
}
td.hatch {
  background: repeating-conic-gradient(#0078d7 0 25%, #7a8088 0 50%) 0 0 / 2px 2px;
}
td.blank {
  background: #fff;
  border: 0;
}
input[type="checkbox"] {
  appearance: none;
  display: inline-block;
  width: 16px;
  height: 16px;
  flex: none;
  border: 1px solid #777;
  border-radius: 4px;
  background: #f7f7f7;
  vertical-align: middle;
}
input[type="checkbox"]:checked {
  border-color: #005fb8;
  background: #005fb8;
}
input[type="checkbox"]:checked::after {
  content: "";
  display: block;
  width: 8px;
  height: 4px;
  margin: 4px 3px;
  border: solid #fff;
  border-width: 0 0 1px 1px;
  transform: rotate(-45deg);
}
/* disabled controls mostly covered by the Filters window */
.hidden-button {
  width: 440px;
  height: 28px;
  margin-top: 10px;
  border: 1px solid #ddd;
  border-radius: 4px;
}
.hidden-box {
  width: 441px;
  height: 83px;
  margin-top: 19px;
  border: 1px solid #ccc;
}
.dialog-footer {
  display: flex;
  justify-content: flex-end;
  gap: 9px;
  padding: 10px 4px 9px;
}
.dialog-footer button,
.push {
  width: 86px;
  height: 26px;
  border: 1px solid #d0d0d0;
  border-bottom-color: #b8b8b8;
  border-radius: 4px;
  background: #fdfdfd;
}
.filters .dialog-footer {
  gap: 8px;
  padding: 14px 0;
}
.filters .dialog-footer button {
  width: 104px;
  height: 28px;
}
.filters .dialog-footer .default {
  border-color: #0067c0;
}
.dialog-footer a {
  margin-right: auto;
  color: #0563c1;
}
.grip {
  position: absolute;
  right: 1px;
  bottom: 1px;
  width: 12px;
  height: 12px;
  fill: #bbb;
}

/* filters dialog */
.filters .dialog-body {
  padding: 15px 12px 0;
}
.groups {
  display: grid;
  grid-template-columns: 396px 306px 1fr;
  gap: 14px;
}
fieldset {
  min-width: 0;
  margin: 0;
  padding: 0 12px;
  border: 1px solid #dcdcdc;
}
legend {
  margin-left: -6px;
  padding: 0 2px;
}
.group {
  padding-top: 9px;
}
.tree {
  height: 360px;
  margin: 0;
  padding: 1px 0 0 32px;
  border: 1px solid #e3e3e3;
  border-top: 2px solid #777;
  border-left: 2px solid #777;
  background: #fff;
  font: 13px/18px "Liberation Sans", Arial, sans-serif;
  list-style: none;
}
.tree > li > ul {
  margin: 0;
  padding: 0 0 0 26px;
  list-style: none;
}
.tree li {
  position: relative;
}
.tree li::before {
  content: "";
  position: absolute;
  top: 9px;
  left: -22px;
  width: 17px;
  border-top: 1px dotted #888;
}
.tree .root::before {
  left: -14px;
  width: 9px;
}
.tree ul li::after,
.tree .last::after {
  content: "";
  position: absolute;
  top: -9px;
  left: -22px;
  height: 18px;
  border-left: 1px dotted #888;
}
.tree .last::after {
  top: -55px;
  height: 64px;
}
.tree .selected span {
  margin-left: -4px;
  padding: 1px 4px;
  background: #efefef;
}
.expander {
  position: absolute;
  z-index: 1;
  top: 3px;
  left: -28px;
  width: 13px;
  height: 13px;
  border: 1px solid #909090;
  background: linear-gradient(#3d64a8, #3d64a8) center / 9px 1px no-repeat #f2f2f2;
}
.filter-tools {
  display: flex;
  gap: 17px;
  padding: 15px 6px 17px;
}
.filter-tools svg {
  width: 20px;
  height: 20px;
}
.categories {
  padding-top: 12px;
  margin: 0 -1px;
}
.categories p {
  margin: 0;
  padding-right: 12px;
}
.list-row {
  display: flex;
  justify-content: space-between;
  padding-top: 7px;
}
.list-row label {
  padding-top: 4px;
}
.list-row select {
  width: 200px;
  height: 31px;
  padding: 0 7px;
  border: 1px solid #888;
  border-radius: 2px;
  background-color: #fff;
  background-image: url("data:image/svg+xml,%3Csvg xmlns='http://www.w3.org/2000/svg' width='10' height='8'%3E%3Cpath d='M1 2l4 4 4-4' fill='none' stroke='%23555'/%3E%3C/svg%3E");
}
.hide-row {
  display: flex;
  gap: 3px;
  padding: 5px 0 8px;
}
.category-list {
  display: grid;
  grid-template-columns: 1fr 20px;
  grid-template-rows: 203px 20px;
  border: 1px solid #fff;
  border-top: 2px solid #777;
  border-left: 2px solid #777;
  font: 13px/20px "Liberation Sans", Arial, sans-serif;
}
.category-items {
  padding: 1px 0 1px 10px;
  background: #fff;
}
.category-items label {
  display: flex;
  align-items: center;
  height: 20px;
  border-left: 1px dotted #888;
}
.category-items label::before {
  content: "";
  width: 15px;
  margin-right: 3px;
  border-top: 1px dotted #888;
}
.category-items input[type="checkbox"] {
  width: 13px;
  height: 13px;
  margin-right: 6px;
  border-radius: 0;
  background: #fff;
}
.category-items span {
  padding: 0 4px;
}
.category-items .selected {
  background: #efefef;
}
.v-scroll {
  width: 6px;
  height: 21px;
  margin: 21px 0 0 7px;
  background: #868686;
}
.h-scroll {
  width: 205px;
  height: 6px;
  margin: 7px 0 0 21px;
  background: #868686;
}
.check-buttons {
  display: flex;
  gap: 9px;
  padding: 12px 0 0 1px;
}
.push {
  width: 89px;
}
.rules {
  margin: 22px -2px 0 0;
  padding: 7px 7px 8px;
  border: 1px solid #1650a8;
  border-left-width: 5px;
  font-size: 14px;
  line-height: 20px;
}
.rule-head {
  display: grid;
  grid-template-columns: 1fr 93px 94px;
  gap: 8px;
}
.rules select,
.rule-head button {
  height: 28px;
  padding: 0 6px;
  border: 1px solid #acacac;
  background-color: #e9e9e9;
}
.rule-head button {
  border-color: #707070;
  background: #ddd;
}
.rules .combine {
  color: #1650a8;
  font-weight: bold;
}
.rule {
  display: flex;
  align-items: center;
  gap: 7px;
  padding: 7px 0 0 27px;
}
.rule select {
  width: 120px;
}
.rules select:disabled {
  border-color: #d9d9d9;
  background-color: #efefef;
  color: #111;
  opacity: 1;
  background-image: url("data:image/svg+xml,%3Csvg xmlns='http://www.w3.org/2000/svg' width='10' height='8'%3E%3Cpath d='M2 1l3 4 3-4' fill='none' stroke='%23bbb' stroke-width='2'/%3E%3C/svg%3E");
}
.rule .wide {
  width: 311px;
}
.rule .value {
  width: 281px;
}
.rules .white {
  background-color: #fff;
}
.remove {
  width: 17px;
  height: 6px;
  margin-left: 3px;
  border: 1px solid #a80c0c;
  background: #f0605a;
}
```
